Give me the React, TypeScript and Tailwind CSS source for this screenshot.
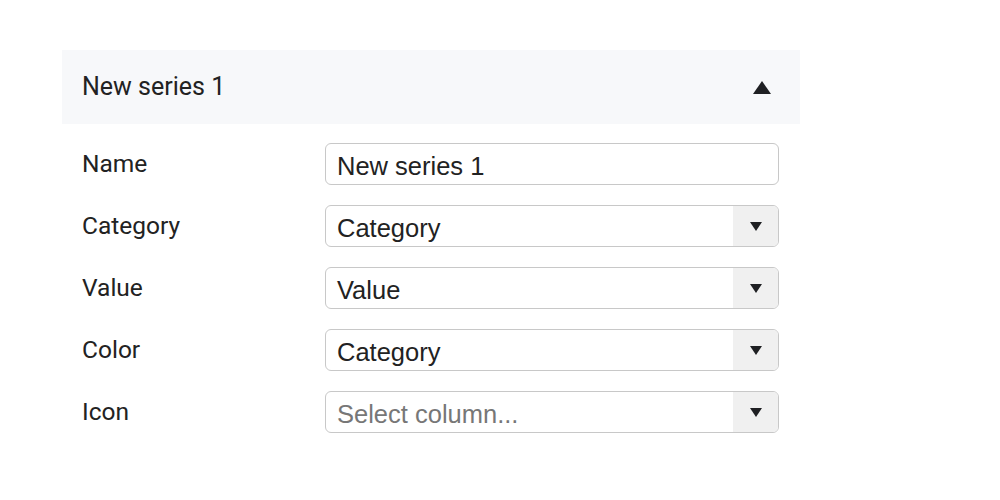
import React from "react";

type Row = {
  label: string;
  value?: string;
  placeholder?: string;
  select: boolean;
};

const rows: Row[] = [
  { label: "Name", value: "New series 1", select: false },
  { label: "Category", value: "Category", select: true },
  { label: "Value", value: "Value", select: true },
  { label: "Color", value: "Category", select: true },
  { label: "Icon", placeholder: "Select column...", select: true },
];

const inputFont = { fontFamily: "'Liberation Sans', Arial, sans-serif" };

function Caret({ up }: { up?: boolean }) {
  return up ? (
    <svg width="18" height="13" viewBox="0 0 18 13" aria-hidden="true">
      <path d="M9 0 L18 13 L0 13 Z" fill="#1f2023" />
    </svg>
  ) : (
    <svg width="12" height="9" viewBox="0 0 12 9" aria-hidden="true">
      <path d="M0 0 L12 0 L6 9 Z" fill="#1f2023" />
    </svg>
  );
}

function Field({ row }: { row: Row }) {
  if (!row.select) {
    return (
      <div className="flex-1 h-[42px] border border-[#c8c8c8] rounded-[6px] flex items-center px-[11px] pt-[5px] bg-white">
        <span className="text-[25.5px] text-[#222]" style={inputFont}>
          {row.value}
        </span>
      </div>
    );
  }
  return (
    <div className="flex-1 h-[42px] border border-[#c8c8c8] rounded-[6px] flex overflow-hidden bg-white">
      <div className="flex-1 flex items-center px-[11px] pt-[5px]">
        {row.value ? (
          <span className="text-[25.5px] text-[#222]" style={inputFont}>
            {row.value}
          </span>
        ) : (
          <span className="text-[25.5px] text-[#777]" style={inputFont}>
            {row.placeholder}
          </span>
        )}
      </div>
      <div className="w-[45px] bg-[#f0f0f0] flex items-center justify-center">
        <Caret />
      </div>
    </div>
  );
}

export default function App() {
  return (
    <div
      className="w-[1000px] h-[500px] bg-white pt-[50px] pl-[62px]"
      style={{ fontFamily: "Roboto, 'Liberation Sans', sans-serif" }}
    >
      <div className="w-[738px]">
        <div className="h-[74px] bg-[#f7f8fa] flex items-center justify-between pl-[20px] pr-[29px]">
          <span className="text-[25px] text-[#222]">New series 1</span>
          <Caret up />
        </div>
        <div className="flex flex-col gap-[20px] pt-[19px] pl-[20px] pr-[21px]">
          {rows.map((row) => (
            <div key={row.label} className="flex items-center">
              <div className="w-[243px] text-[24.5px] text-[#222]">{row.label}</div>
              <Field row={row} />
            </div>
          ))}
        </div>
      </div>
    </div>
  );
}
